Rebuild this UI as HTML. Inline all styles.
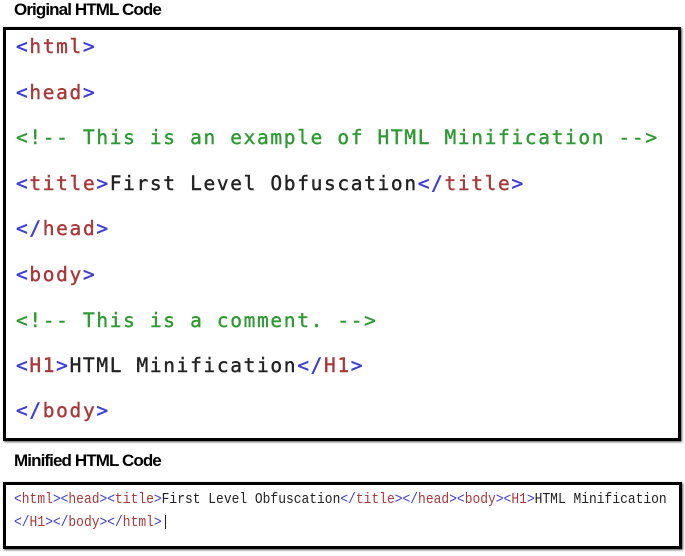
<!DOCTYPE html>
<html><head><meta charset="utf-8"><style>
body{margin:0;width:685px;height:556px;background:#fff;position:relative;overflow:hidden;font-family:"Liberation Sans",sans-serif}
.h{position:absolute;left:14px;font-weight:bold;font-size:17px;letter-spacing:-0.9px;color:#000}
.box{position:absolute;border:3px solid #000;box-sizing:border-box;box-shadow:1px 1px 2px #555}
.l{position:absolute;left:10px;font-family:"DejaVu Sans Mono","Liberation Mono",monospace;font-size:19.5px;letter-spacing:1.65px;white-space:pre;color:#222;line-height:24px;-webkit-text-stroke:0.4px}
.b{color:#3c3cd8}.t{color:#a8383a}.c{color:#2e9a32}
.m{position:absolute;left:8px;font-family:"Liberation Mono",monospace;font-size:15px;white-space:pre;color:#222;line-height:18px;transform:scaleX(0.863);transform-origin:0 0}
</style></head><body>
<div class="h" style="top:0px">Original HTML Code</div>
<div class="box" style="left:3px;top:27px;width:678px;height:414px">
<div class="l" style="top:5px"><span class="b">&lt;</span><span class="t">html</span><span class="b">&gt;</span></div>
<div class="l" style="top:51px"><span class="b">&lt;</span><span class="t">head</span><span class="b">&gt;</span></div>
<div class="l c" style="top:96px">&lt;!-- This is an example of HTML Minification --&gt;</div>
<div class="l" style="top:142px"><span class="b">&lt;</span><span class="t">title</span><span class="b">&gt;</span>First Level Obfuscation<span class="b">&lt;/</span><span class="t">title</span><span class="b">&gt;</span></div>
<div class="l" style="top:187px"><span class="b">&lt;/</span><span class="t">head</span><span class="b">&gt;</span></div>
<div class="l" style="top:233px"><span class="b">&lt;</span><span class="t">body</span><span class="b">&gt;</span></div>
<div class="l c" style="top:279px">&lt;!-- This is a comment. --&gt;</div>
<div class="l" style="top:324px"><span class="b">&lt;</span><span class="t">H1</span><span class="b">&gt;</span>HTML Minification<span class="b">&lt;/</span><span class="t">H1</span><span class="b">&gt;</span></div>
<div class="l" style="top:369px"><span class="b">&lt;/</span><span class="t">body</span><span class="b">&gt;</span></div>
</div>
<div class="h" style="top:451px">Minified HTML Code</div>
<div class="box" style="left:3px;top:482px;width:679px;height:67px">
<div class="m" style="top:6px"><span class="b">&lt;</span><span class="t">html</span><span class="b">&gt;&lt;</span><span class="t">head</span><span class="b">&gt;&lt;</span><span class="t">title</span><span class="b">&gt;</span>First Level Obfuscation<span class="b">&lt;/</span><span class="t">title</span><span class="b">&gt;&lt;/</span><span class="t">head</span><span class="b">&gt;&lt;</span><span class="t">body</span><span class="b">&gt;&lt;</span><span class="t">H1</span><span class="b">&gt;</span>HTML Minification</div>
<div class="m" style="top:29px"><span class="b">&lt;/</span><span class="t">H1</span><span class="b">&gt;&lt;/</span><span class="t">body</span><span class="b">&gt;&lt;/</span><span class="t">html</span><span class="b">&gt;</span>|</div>
</div>
</body></html>
